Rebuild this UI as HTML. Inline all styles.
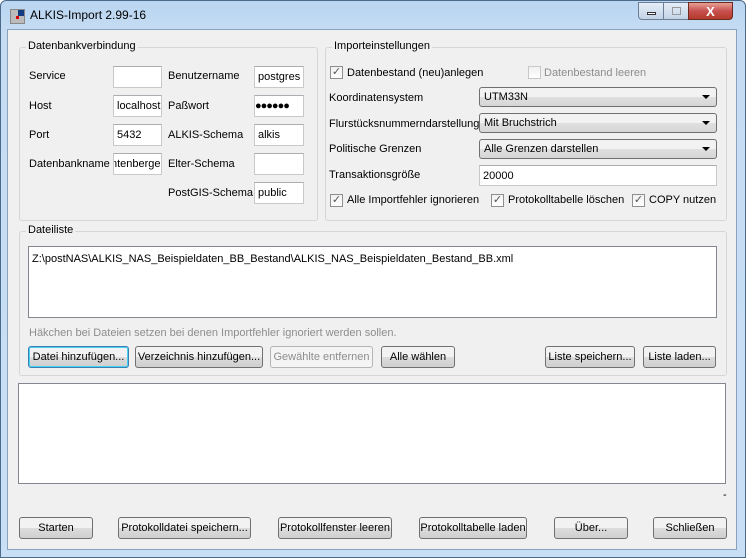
<!DOCTYPE html>
<html><head><meta charset="utf-8"><style>
*{box-sizing:border-box}
body{margin:0;width:746px;height:558px;overflow:hidden;font:11px "Liberation Sans",sans-serif;color:#000;background:#fff}
.win{position:absolute;left:0;top:0;width:746px;height:558px;background:linear-gradient(#b9d5f1,#c5dcf3 30px,#c8dff5);border:1px solid #4c6a8a;border-radius:6px 6px 0 0}
.client{position:absolute;left:7px;top:29px;width:730px;height:521px;background:#f0f0f0;border:1px solid #8aa2bd}
.a{position:absolute;white-space:nowrap}
.grp{position:absolute;border:1px solid #d6d6d6;border-radius:3px}
.gt{position:absolute;background:#f0f0f0;padding:0 2px;top:-8px;left:6px}
.in{position:absolute;background:#fff;border:1px solid #c9c9c9;border-top-color:#abadb3;height:22px;padding:4px 3px;overflow:hidden;white-space:nowrap}
.cb{position:absolute;width:13px;height:13px;border:1px solid #8e8f8f;background:linear-gradient(#f0f0f0,#fff);font-size:11px;line-height:11px;text-align:center;color:#555}
.cmb{position:absolute;height:20px;border:1px solid #707070;border-radius:3px;background:linear-gradient(#f2f2f2 50%,#e0e0e0 50%,#d6d6d6);padding:3px 4px;white-space:nowrap}
.cmb:after{content:"";position:absolute;right:6px;top:7px;border:4px solid transparent;border-top:4px solid #000;border-bottom:0}
.btn{position:absolute;height:22px;border:1px solid #707070;border-radius:3px;background:linear-gradient(#f2f2f2 50%,#dddddd 50%,#cfcfcf);text-align:center;line-height:20px;white-space:nowrap;overflow:hidden}
</style></head><body>
<div class="win">
<div class="a" style="left:9px;top:8px;width:15px;height:15px;background:#bbb;border:1px solid #888"><div style="position:absolute;right:0;top:0;width:6px;height:6px;background:#123b80"></div><div style="position:absolute;left:5px;top:6px;width:3px;height:3px;background:#d00"></div></div>
<div class="a" style="left:29px;top:7px;font-size:12px">ALKIS-Import 2.99-16</div>
<div class="a" style="left:637px;top:1px;width:26px;height:18px;border:1px solid #6d7f96;border-radius:0 0 0 4px;background:linear-gradient(#e6eef8,#c3d3e6)"><div style="position:absolute;left:8px;top:9px;width:9px;height:3px;border:1px solid #333;background:#fff"></div></div>
<div class="a" style="left:662px;top:1px;width:26px;height:18px;border:1px solid #6d7f96;background:linear-gradient(#e6eef8,#c3d3e6)"><div style="position:absolute;left:8px;top:4px;width:9px;height:8px;border:1px solid #999"></div></div>
<div class="a" style="left:687px;top:1px;width:45px;height:18px;border:1px solid #6b2a22;border-radius:0 0 4px 0;background:linear-gradient(#e8a093,#c75050 50%,#b53a2a);color:#fff;font-weight:bold;text-align:center;font-size:13px;line-height:17px">X</div>
</div>
<div class="client"></div>
<div class="grp" style="left:19px;top:47px;width:299px;height:174px"><span class="gt">Datenbankverbindung</span></div>
<div class="grp" style="left:325px;top:47px;width:402px;height:174px"><span class="gt">Importeinstellungen</span></div>
<div class="a" style="left:29px;top:70px">Service</div>
<div class="a" style="left:29px;top:100px">Host</div>
<div class="a" style="left:29px;top:129px">Port</div>
<div class="a" style="left:29px;top:158px">Datenbankname</div>
<div class="in" style="left:113px;top:66px;width:49px"></div>
<div class="in" style="left:113px;top:95px;width:49px">localhost</div>
<div class="in" style="left:113px;top:124px;width:49px">5432</div>
<div class="in" style="left:113px;top:153px;width:49px;text-indent:-6px">ntenberge</div>
<div class="a" style="left:168px;top:70px">Benutzername</div>
<div class="a" style="left:168px;top:100px">Paßwort</div>
<div class="a" style="left:168px;top:129px">ALKIS-Schema</div>
<div class="a" style="left:168px;top:158px">Elter-Schema</div>
<div class="a" style="left:168px;top:187px">PostGIS-Schema</div>
<div class="in" style="left:254px;top:66px;width:50px">postgres</div>
<div class="in" style="left:254px;top:95px;width:50px;letter-spacing:-1px;text-indent:-3px">●●●●●●</div>
<div class="in" style="left:254px;top:124px;width:50px">alkis</div>
<div class="in" style="left:254px;top:153px;width:50px"></div>
<div class="in" style="left:254px;top:182px;width:50px">public</div>

<div class="cb" style="left:330px;top:66px">✓</div><div class="a" style="left:347px;top:67px">Datenbestand (neu)anlegen</div>
<div class="cb" style="left:528px;top:66px;border-color:#c8c8c8"></div><div class="a" style="left:544px;top:67px;color:#8d8d8d">Datenbestand leeren</div>
<div class="a" style="left:329px;top:92px">Koordinatensystem</div>
<div class="a" style="left:329px;top:118px">Flurstücksnummerndarstellung</div>
<div class="a" style="left:329px;top:143px">Politische Grenzen</div>
<div class="a" style="left:329px;top:169px">Transaktionsgröße</div>
<div class="cmb" style="left:479px;top:87px;width:238px">UTM33N</div>
<div class="cmb" style="left:479px;top:113px;width:238px">Mit Bruchstrich</div>
<div class="cmb" style="left:479px;top:139px;width:238px">Alle Grenzen darstellen</div>
<div class="in" style="left:479px;top:165px;width:238px;height:21px">20000</div>
<div class="cb" style="left:330px;top:194px">✓</div><div class="a" style="left:347px;top:194px">Alle Importfehler ignorieren</div>
<div class="cb" style="left:491px;top:194px">✓</div><div class="a" style="left:508px;top:194px">Protokolltabelle löschen</div>
<div class="cb" style="left:632px;top:194px">✓</div><div class="a" style="left:649px;top:194px">COPY nutzen</div>

<div class="grp" style="left:19px;top:231px;width:708px;height:145px"><span class="gt" style="left:6px">Dateiliste</span></div>
<div class="a" style="left:28px;top:246px;width:689px;height:72px;background:#fff;border:1px solid #828790;padding:6px 3px">Z:\postNAS\ALKIS_NAS_Beispieldaten_BB_Bestand\ALKIS_NAS_Beispieldaten_Bestand_BB.xml</div>
<div class="a" style="left:29px;top:327px;color:#8d8d8d">Häkchen bei Dateien setzen bei denen Importfehler ignoriert werden sollen.</div>
<div class="btn" style="left:28px;top:346px;width:101px;border-color:#3c7fb1;box-shadow:inset 0 0 0 1px #48d1f6">Datei hinzufügen...</div>
<div class="btn" style="left:135px;top:346px;width:128px">Verzeichnis hinzufügen...</div>
<div class="btn" style="left:270px;top:346px;width:103px;color:#8d8d8d;border-color:#b5b5b5;background:#f4f4f4">Gewählte entfernen</div>
<div class="btn" style="left:381px;top:346px;width:74px">Alle wählen</div>
<div class="btn" style="left:545px;top:346px;width:90px">Liste speichern...</div>
<div class="btn" style="left:643px;top:346px;width:73px">Liste laden...</div>
<div class="a" style="left:18px;top:383px;width:708px;height:101px;background:#fff;border:1px solid #828790"></div>
<div class="a" style="left:723px;top:489px">-</div>
<div class="btn" style="left:19px;top:517px;width:74px">Starten</div>
<div class="btn" style="left:118px;top:517px;width:133px">Protokolldatei speichern...</div>
<div class="btn" style="left:278px;top:517px;width:114px">Protokollfenster leeren</div>
<div class="btn" style="left:419px;top:517px;width:108px">Protokolltabelle laden</div>
<div class="btn" style="left:554px;top:517px;width:74px">Über...</div>
<div class="btn" style="left:653px;top:517px;width:74px">Schließen</div>
</body></html>
